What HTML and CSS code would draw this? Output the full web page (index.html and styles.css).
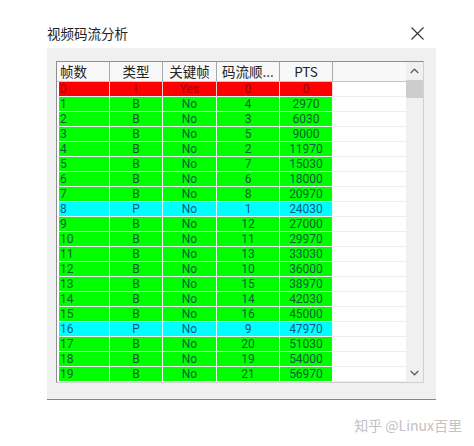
FILE: index.html
```
<!DOCTYPE html>
<html lang="zh">
<head>
<meta charset="utf-8">
<link rel="stylesheet" href="styles.css">
</head>
<body>
<div class="title-bar">
  <span class="title">视频码流分析</span>
  <svg class="close" width="13" height="13" viewBox="0 0 13 13"><path d="M0.5 0.5 L12.5 12.5 M12.5 0.5 L0.5 12.5" stroke="#333" stroke-width="1.1" fill="none"/></svg>
</div>
<div class="panel">
  <div class="list">
    <div class="main">
      <div class="header">
        <div class="hc c1 left">帧数</div>
        <div class="hc c2">类型</div>
        <div class="hc c3">关键帧</div>
        <div class="hc c4">码流顺...</div>
        <div class="hc c5">PTS</div>
        <div class="hc rest"></div>
      </div>
      <div class="rows">
        <div class="row red"><div class="cell c1 left">0</div><div class="cell c2">I</div><div class="cell c3">Yes</div><div class="cell c4">0</div><div class="cell c5">0</div></div>
        <div class="row green"><div class="cell c1 left">1</div><div class="cell c2">B</div><div class="cell c3">No</div><div class="cell c4">4</div><div class="cell c5">2970</div></div>
        <div class="row green"><div class="cell c1 left">2</div><div class="cell c2">B</div><div class="cell c3">No</div><div class="cell c4">3</div><div class="cell c5">6030</div></div>
        <div class="row green"><div class="cell c1 left">3</div><div class="cell c2">B</div><div class="cell c3">No</div><div class="cell c4">5</div><div class="cell c5">9000</div></div>
        <div class="row green"><div class="cell c1 left">4</div><div class="cell c2">B</div><div class="cell c3">No</div><div class="cell c4">2</div><div class="cell c5">11970</div></div>
        <div class="row green"><div class="cell c1 left">5</div><div class="cell c2">B</div><div class="cell c3">No</div><div class="cell c4">7</div><div class="cell c5">15030</div></div>
        <div class="row green"><div class="cell c1 left">6</div><div class="cell c2">B</div><div class="cell c3">No</div><div class="cell c4">6</div><div class="cell c5">18000</div></div>
        <div class="row green"><div class="cell c1 left">7</div><div class="cell c2">B</div><div class="cell c3">No</div><div class="cell c4">8</div><div class="cell c5">20970</div></div>
        <div class="row cyan"><div class="cell c1 left">8</div><div class="cell c2">P</div><div class="cell c3">No</div><div class="cell c4">1</div><div class="cell c5">24030</div></div>
        <div class="row green"><div class="cell c1 left">9</div><div class="cell c2">B</div><div class="cell c3">No</div><div class="cell c4">12</div><div class="cell c5">27000</div></div>
        <div class="row green"><div class="cell c1 left">10</div><div class="cell c2">B</div><div class="cell c3">No</div><div class="cell c4">11</div><div class="cell c5">29970</div></div>
        <div class="row green"><div class="cell c1 left">11</div><div class="cell c2">B</div><div class="cell c3">No</div><div class="cell c4">13</div><div class="cell c5">33030</div></div>
        <div class="row green"><div class="cell c1 left">12</div><div class="cell c2">B</div><div class="cell c3">No</div><div class="cell c4">10</div><div class="cell c5">36000</div></div>
        <div class="row green"><div class="cell c1 left">13</div><div class="cell c2">B</div><div class="cell c3">No</div><div class="cell c4">15</div><div class="cell c5">38970</div></div>
        <div class="row green"><div class="cell c1 left">14</div><div class="cell c2">B</div><div class="cell c3">No</div><div class="cell c4">14</div><div class="cell c5">42030</div></div>
        <div class="row green"><div class="cell c1 left">15</div><div class="cell c2">B</div><div class="cell c3">No</div><div class="cell c4">16</div><div class="cell c5">45000</div></div>
        <div class="row cyan"><div class="cell c1 left">16</div><div class="cell c2">P</div><div class="cell c3">No</div><div class="cell c4">9</div><div class="cell c5">47970</div></div>
        <div class="row green"><div class="cell c1 left">17</div><div class="cell c2">B</div><div class="cell c3">No</div><div class="cell c4">20</div><div class="cell c5">51030</div></div>
        <div class="row green"><div class="cell c1 left">18</div><div class="cell c2">B</div><div class="cell c3">No</div><div class="cell c4">19</div><div class="cell c5">54000</div></div>
        <div class="row green"><div class="cell c1 left">19</div><div class="cell c2">B</div><div class="cell c3">No</div><div class="cell c4">21</div><div class="cell c5">56970</div></div>
      </div>
    </div>
    <div class="scrollbar">
      <div class="sb-btn"><svg width="9" height="6" viewBox="0 0 9 6"><polyline points="0.7,5 4.5,1.2 8.3,5" fill="none" stroke="#606060" stroke-width="1.3"/></svg></div>
      <div class="sb-thumb"></div>
      <div class="sb-track"></div>
      <div class="sb-btn"><svg width="9" height="6" viewBox="0 0 9 6"><polyline points="0.7,1 4.5,4.8 8.3,1" fill="none" stroke="#606060" stroke-width="1.3"/></svg></div>
    </div>
  </div>
</div>
<div class="watermark">知乎 @Linux百里</div>
</body>
</html>
```
FILE: styles.css
```
html, body {
  margin: 0;
  padding: 0;
}
body {
  width: 474px;
  height: 446px;
  background: #ffffff;
  font-family: "Noto Sans CJK SC", "Noto Sans", sans-serif;
  overflow: hidden;
}
.title-bar {
  height: 48px;
  box-sizing: border-box;
  padding: 18px 50px 0 47px;
  display: flex;
  justify-content: space-between;
  align-items: center;
}
.title {
  font-size: 13.5px;
  line-height: 16px;
  color: #222;
}
.close {
  display: block;
}
.panel {
  margin-left: 47px;
  width: 389px;
  height: 352px;
  box-sizing: border-box;
  background: #f0f0f0;
  border-bottom: 1px solid #858585;
  padding: 13px 12px 0 9px;
}
.list {
  display: flex;
  width: 368px;
  height: 322px;
  box-sizing: border-box;
  border: 1px solid #8e8e8e;
  border-right-color: #d0d0d0;
  border-bottom-color: #d0d0d0;
  background: #fff;
}
.main {
  flex: 1;
  display: flex;
  flex-direction: column;
  overflow: hidden;
}
.header {
  display: flex;
  height: 20px;
  box-sizing: border-box;
  border-bottom: 1px solid #c6c6c6;
  background: #f8f8f8;
}
.hc {
  box-sizing: border-box;
  border-right: 1px solid #a8a8a8;
  font-size: 13.5px;
  line-height: 18px;
  color: #222;
  text-align: center;
}
.hc.left {
  text-align: left;
  padding-left: 3px;
}
.hc.rest {
  flex: 1;
  border-right: none;
}
.c1 { width: 53px; }
.c2 { width: 53px; }
.c3 { width: 54px; }
.c4 { width: 63px; }
.c5 { width: 53px; }
.rows {
  display: flex;
  flex-direction: column;
}
.row {
  display: flex;
  height: 15px;
  box-sizing: border-box;
  border-bottom: 1px solid #eeeeee;
  padding-left: 2px;
}
.row .c1 { width: 51px; }
.cell {
  box-sizing: border-box;
  border-right: 1px solid #f4fff4;
  font-family: Roboto, "Noto Sans", sans-serif;
  font-size: 12px;
  line-height: 14px;
  text-align: center;
}
.cell.left {
  text-align: left;
  padding-left: 1px;
}
.red .cell { background: #ff0000; color: #a00000; border-right-color: #ffd0d0; }
.green .cell { background: #00ff00; color: #0b5e33; }
.cyan .cell { background: #00ffff; color: #0a5a7e; border-right-color: #e0ffff; }
.scrollbar {
  width: 17px;
  display: flex;
  flex-direction: column;
  background: #f0f0f0;
}
.sb-btn {
  height: 18px;
  display: flex;
  align-items: center;
  justify-content: center;
}
.sb-thumb {
  height: 18px;
  background: #cdcdcd;
}
.sb-track {
  flex: 1;
}
.watermark {
  margin-top: 17px;
  padding-right: 12px;
  text-align: right;
  font-size: 14px;
  line-height: 16px;
  color: #c2c2c2;
}
```
